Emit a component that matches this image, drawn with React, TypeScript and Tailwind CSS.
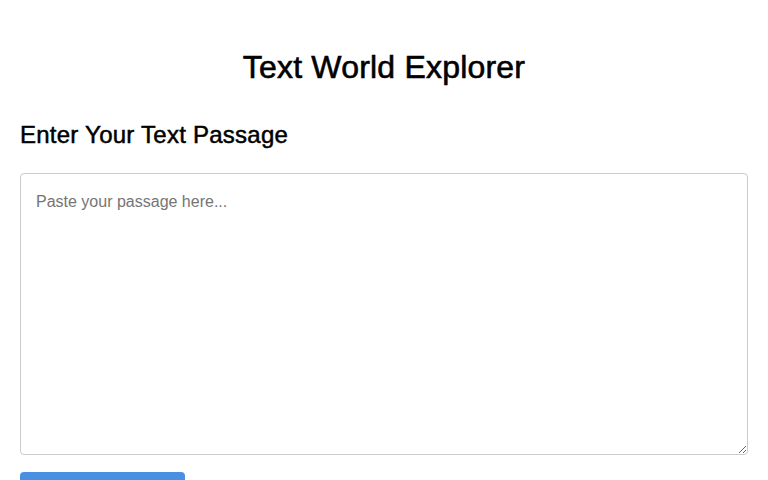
export default function App() {
  return (
    <div className="min-h-screen bg-white p-5 font-['Liberation_Sans',Arial,sans-serif] text-black">
      <h1 className="mt-[29px] text-center text-[32px] leading-[37px] font-normal tracking-[0.2px] [-webkit-text-stroke:0.6px_black]">
        Text World Explorer
      </h1>

      <section className="mt-[35px]">
        <h2 className="text-[24px] leading-[28px] font-normal tracking-[0.25px] [-webkit-text-stroke:0.5px_black]">
          Enter Your Text Passage
        </h2>
        <textarea
          className="mt-[24px] block h-[282px] w-full resize-y rounded border border-[#ccc] px-[15px] pt-[16px] pb-[15px] text-[16px] outline-none placeholder:text-[#757575]"
          placeholder="Paste your passage here..."
        />
        <button className="mt-[17px] h-[40px] w-[165px] rounded bg-[#4a90e2] text-[16px] text-white">
          Explore World
        </button>
      </section>
    </div>
  );
}
